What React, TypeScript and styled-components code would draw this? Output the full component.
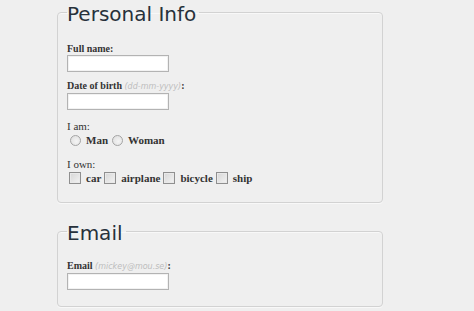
import styled, { createGlobalStyle } from "styled-components";

const GlobalStyle = createGlobalStyle`
  html, body {
    margin: 0;
    padding: 0;
    background: #efefef;
  }
`;

const Page = styled.div`
  padding-left: 57px;
`;

const Box = styled.fieldset`
  box-sizing: border-box;
  width: 326px;
  min-width: 0;
  margin: 0 0 16px;
  padding: 0 9px 16px;
  border: 1px solid #d2d2d2;
  border-radius: 4px;
  box-shadow: 0 1px 0 #f8f8f8, inset 0 1px 0 #f8f8f8;
`;

const Legend = styled.legend`
  padding: 4px 3px 0 0;
  font-family: "DejaVu Sans", Verdana, sans-serif;
  font-size: 20px;
  line-height: 20px;
  color: #27313b;
`;

const Field = styled.div<{ top: number }>`
  margin-top: ${(p) => p.top}px;
  font-family: "Liberation Serif", "Times New Roman", serif;
  font-size: 10px;
  color: #333;
`;

const Label = styled.label<{ plain?: boolean }>`
  display: block;
  line-height: 12px;
  font-size: ${(p) => (p.plain ? 11 : 10)}px;
  font-weight: ${(p) => (p.plain ? 400 : 700)};
`;

const Hint = styled.span`
  font-family: "DejaVu Sans", Verdana, sans-serif;
  font-style: italic;
  font-weight: 400;
  font-size: 8px;
  color: #bdbdbd;
`;

const TextInput = styled.input`
  display: block;
  box-sizing: border-box;
  width: 102px;
  height: 17px;
  margin: 0;
  border: 1px solid #b3b3b3;
  box-shadow: inset 0 0 0 1px #f2f2f2;
  background: #fff;
  outline: none;
`;

const Options = styled.div`
  display: flex;
  align-items: center;
  height: 16px;
  padding-left: 2px;
`;

const Option = styled.label`
  display: flex;
  align-items: center;
  gap: 5px;
  margin-right: 3px;
  font-size: 11px;
  font-weight: 700;
  line-height: 16px;
`;

const Radio = styled.input`
  appearance: none;
  box-sizing: border-box;
  width: 11px;
  height: 11px;
  margin: 0 0 0 1px;
  border: 1px solid #a4a4a4;
  border-radius: 50%;
  background: radial-gradient(circle at 60% 60%, #f4f4f4 0%, #dcdcdc 100%);
`;

const Check = styled.input`
  appearance: none;
  box-sizing: border-box;
  width: 12px;
  height: 12px;
  margin: 0;
  border: 1px solid #8f8f8f;
  background: linear-gradient(135deg, #d6d6d6 0%, #f3f3f3 100%);
  box-shadow: inset 0 0 0 1px #e9e9e9;
`;

export default function App() {
  return (
    <Page>
      <GlobalStyle />
      <Box>
        <Legend>Personal Info</Legend>
        <Field top={19}>
          <Label htmlFor="name">Full name:</Label>
          <TextInput id="name" type="text" />
        </Field>
        <Field top={8}>
          <Label htmlFor="dob">
            Date of birth <Hint>(dd-mm-yyyy)</Hint>:
          </Label>
          <TextInput id="dob" type="text" />
        </Field>
        <Field top={10}>
          <Label plain>I am:</Label>
          <Options>
            <Option>
              <Radio type="radio" name="sex" />
              Man
            </Option>
            <Option>
              <Radio type="radio" name="sex" />
              Woman
            </Option>
          </Options>
        </Field>
        <Field top={10}>
          <Label plain>I own:</Label>
          <Options>
            {["car", "airplane", "bicycle", "ship"].map((v) => (
              <Option key={v}>
                <Check type="checkbox" />
                {v}
              </Option>
            ))}
          </Options>
        </Field>
      </Box>
      <Box>
        <Legend>Email</Legend>
        <Field top={17}>
          <Label htmlFor="email">
            Email <Hint>(mickey@mou.se)</Hint>:
          </Label>
          <TextInput id="email" type="text" />
        </Field>
      </Box>
    </Page>
  );
}
